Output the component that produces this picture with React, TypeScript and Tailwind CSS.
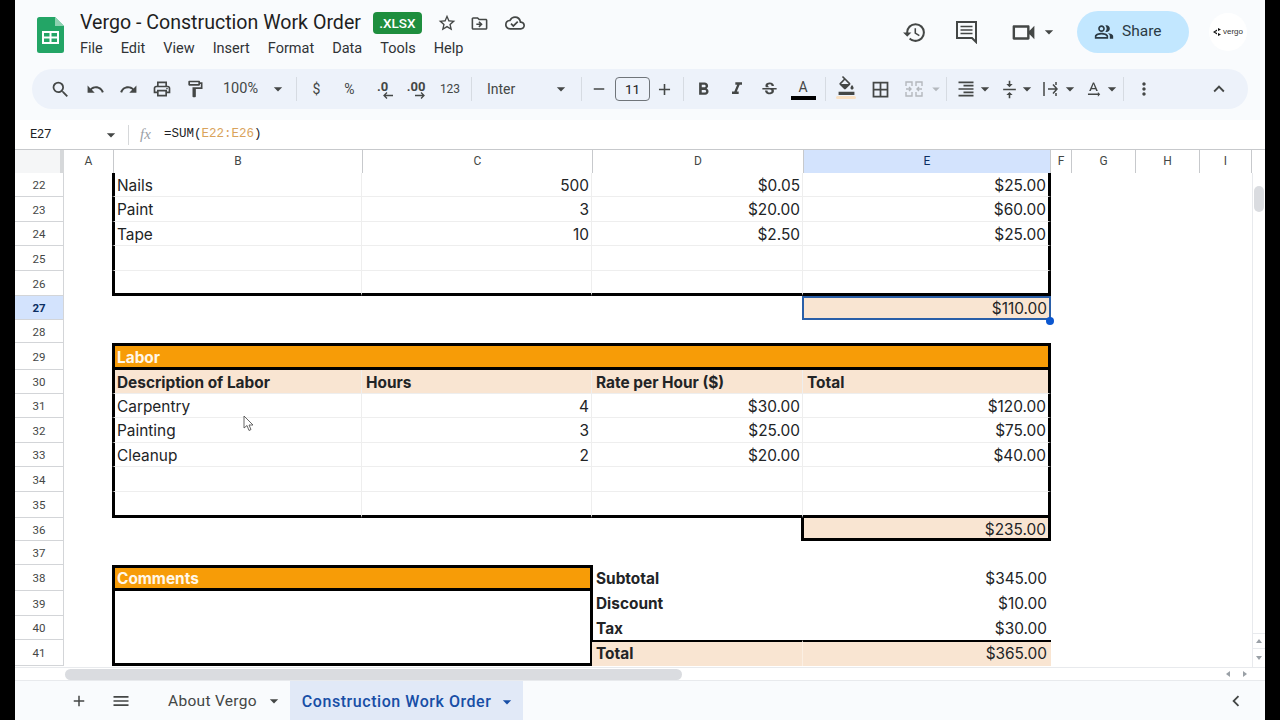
import React from 'react';
import {
  MdSearch, MdUndo, MdRedo, MdOutlinePrint, MdOutlineFormatPaint, MdArrowDropDown, MdRemove, MdAdd,
  MdFormatBold, MdFormatItalic, MdStrikethroughS, MdOutlineFormatColorFill, MdBorderAll,
  MdFormatAlignRight, MdVerticalAlignCenter, MdTextRotationNone, MdMoreVert, MdKeyboardArrowUp,
  MdStarBorder, MdOutlineDriveFileMove, MdOutlineCloudDone, MdHistory, MdOutlineVideocam,
  MdOutlinePeopleAlt, MdMenu, MdChevronLeft,
} from 'react-icons/md';

const Sep = ({ className = '' }: { className?: string }) => <div className={`w-px h-[24px] bg-[#d6dbe2] shrink-0 ${className}`} />;

const Caret = ({ className = 'w-[16px]' }: { className?: string }) => (
  <div className={`flex justify-center shrink-0 ${className}`}>
    <MdArrowDropDown size={20} className="shrink-0" />
  </div>
);

const Tool = ({ children, className = 'w-[33px]' }: { children: React.ReactNode; className?: string }) => (
  <div className={`flex items-center justify-center shrink-0 ${className}`}>{children}</div>
);

const MergeIcon = () => (
  <svg width="18" height="18" viewBox="0 0 18 18" fill="none" stroke="#b4b8bd" strokeWidth="1.4">
    <path d="M1 6V2h6v4M11 6V2h6v4M1 12v4h6v-4M11 12v4h6v-4" />
    <path d="M1 9h5M4 7l2 2-2 2M17 9h-5M14 7l-2 2 2 2" />
  </svg>
);

const WrapIcon = () => (
  <svg width="18" height="18" viewBox="0 0 18 18" fill="none" stroke="#444746" strokeWidth="1.5">
    <path d="M2 2v14M6 9h9M11 4.5 15 9l-4 4.5M14 2v3M14 13v3" />
  </svg>
);

function Toolbar() {
  return (
    <div className="mx-[17px] h-[40px] rounded-full bg-[#edf2fa] flex items-center pl-[12px] text-[#444746] font-['Roboto',sans-serif]">
      <Tool><MdSearch size={21} /></Tool>
      <Tool className="w-[33px] ml-[2px]"><MdUndo size={19} /></Tool>
      <Tool><MdRedo size={19} /></Tool>
      <Tool><MdOutlinePrint size={20} /></Tool>
      <Tool><MdOutlineFormatPaint size={20} /></Tool>
      <Tool className="w-[59px] text-[14.5px]">100%</Tool>
      <Caret />
      <Sep className="ml-[10px]" />
      <Tool className="w-[33px] ml-[3px] text-[14px]">$</Tool>
      <Tool className="w-[33px] text-[14px]">%</Tool>
      <Tool>
        <div className="relative text-[13px] font-bold leading-none -mt-[5px]">
          .0
          <svg className="absolute left-[6px] top-[12px]" width="10" height="7" viewBox="0 0 10 7" fill="none" stroke="#444746" strokeWidth="1.3"><path d="M10 3.5H1M4 .5l-3 3 3 3" /></svg>
        </div>
      </Tool>
      <Tool className="w-[34px]">
        <div className="relative text-[13px] font-bold leading-none -mt-[5px]">
          .00
          <svg className="absolute left-[8px] top-[12px]" width="10" height="7" viewBox="0 0 10 7" fill="none" stroke="#444746" strokeWidth="1.3"><path d="M0 3.5h9M6 .5l3 3-3 3" /></svg>
        </div>
      </Tool>
      <Tool className="w-[34px] text-[12px]">123</Tool>
      <Sep className="ml-[4px]" />
      <div className="ml-[15px] w-[60px] text-[14px] shrink-0">Inter</div>
      <Caret className="w-[16px] ml-[6px]" />
      <Sep className="ml-[12px]" />
      <Tool><MdRemove size={18} /></Tool>
      <div className="w-[35px] h-[24px] border border-[#70757a] rounded-[4px] flex items-center justify-center text-[13.5px] text-[#202124] shrink-0">11</div>
      <Tool className="w-[29px]"><MdAdd size={19} /></Tool>
      <Sep className="ml-[4px]" />
      <Tool className="w-[33px] ml-[3px]"><MdFormatBold size={21} /></Tool>
      <Tool><MdFormatItalic size={20} /></Tool>
      <Tool><MdStrikethroughS size={19} /></Tool>
      <Tool className="w-[34px]">
        <div className="flex flex-col items-center w-[25px]">
          <span className="text-[14px] leading-[15px] mt-[1px]">A</span>
          <div className="w-[25px] h-[4px] bg-black mt-[1px]" />
        </div>
      </Tool>
      <Sep className="ml-[5px]" />
      <Tool className="w-[34px] ml-[3px]">
        <div className="flex flex-col items-center w-[25px]">
          <MdOutlineFormatColorFill size={19} className="-mt-[3px]" />
          <div className="w-[20px] h-[3px] bg-[#f9e0c2] rounded-full mt-[1px]" />
        </div>
      </Tool>
      <Tool className="w-[33px] ml-[1px]"><MdBorderAll size={21} /></Tool>
      <Tool className="w-[32px] ml-[1px]"><MergeIcon /></Tool>
      <div className="flex justify-center w-[12px] shrink-0 text-[#b4b8bd]"><MdArrowDropDown size={18} className="shrink-0" /></div>
      <Sep className="ml-[4px]" />
      <Tool className="w-[32px] ml-[3px]"><MdFormatAlignRight size={20} /></Tool>
      <Caret className="w-[6px]" />
      <Tool className="w-[32px] ml-[5px]"><MdVerticalAlignCenter size={19} /></Tool>
      <Caret className="w-[4px]" />
      <Tool className="w-[32px] ml-[6px]"><WrapIcon /></Tool>
      <Caret className="w-[6px]" />
      <Tool className="w-[32px] ml-[4px]"><MdTextRotationNone size={19} /></Tool>
      <Caret className="w-[6px]" />
      <Sep className="ml-[8px]" />
      <Tool className="w-[33px] ml-[3px]"><MdMoreVert size={20} /></Tool>
      <Tool className="w-[33px] ml-[42px]"><MdKeyboardArrowUp size={22} /></Tool>
    </div>
  );
}

function Header() {
  return (
    <div className="h-[69px] flex items-start font-['Roboto',sans-serif] text-[#1f1f1f]">
      <svg className="ml-[22px] mt-[17px] shrink-0" width="27" height="36" viewBox="0 0 27 36">
        <path d="M2.5 0H18l9 9v24.5a2.5 2.5 0 0 1-2.5 2.5h-22A2.5 2.5 0 0 1 0 33.500v-31A2.500 2.500 0 0 1 2.500 0z" fill="#23a566" />
        <path d="M18 0l9 9h-9z" fill="#8ed1b1" />
        <path d="M6 15h15v11H6z" fill="none" stroke="#fff" strokeWidth="2" />
        <path d="M6 20.500h15M13.500 15v11" stroke="#fff" strokeWidth="2" />
      </svg>
      <div className="ml-[16px] shrink-0 w-[470px]">
        <div className="flex items-center h-[24px] mt-[11px]">
          <span className="text-[19.6px] whitespace-nowrap">Vergo - Construction Work Order</span>
          <span className="ml-[12px] w-[49px] h-[22px] bg-[#1e8e3e] rounded-[4px] text-white text-[13.5px] font-medium flex items-center justify-center">.XLSX</span>
          <MdStarBorder size={20} className="ml-[15px] text-[#444746] shrink-0" />
          <MdOutlineDriveFileMove size={19} className="ml-[13px] text-[#444746] shrink-0" />
          <MdOutlineCloudDone size={20} className="ml-[16px] text-[#444746] shrink-0" />
        </div>
        <div className="flex gap-[18px] mt-[3px] text-[14.5px] text-[#303336]">
          <span>File</span><span>Edit</span><span>View</span><span>Insert</span><span>Format</span><span>Data</span><span>Tools</span><span>Help</span>
        </div>
      </div>
      <div className="ml-auto flex items-center h-[42px] mt-[11px] text-[#444746]">
        <MdHistory size={25} className="shrink-0" />
        <svg className="ml-[28px] shrink-0" width="23" height="24" viewBox="0 0 23 24" fill="none" stroke="#444746" strokeWidth="2">
          <path d="M2 2h19v20l-4-4H2z" />
          <path d="M5.500 6.500h12M5.500 10h12M5.500 13.500h12" strokeWidth="1.600" />
        </svg>
        <MdOutlineVideocam size={29} className="ml-[31px] shrink-0" />
        <Caret className="w-[14px] ml-[4px]" />
        <div className="ml-[21px] w-[112px] h-[42px] rounded-full bg-[#c2e7ff] flex items-center pl-[17px] gap-[8px] text-[15.5px] text-[#2b3a44]">
          <MdOutlinePeopleAlt size={20} />
          <span>Share</span>
        </div>
        <div className="ml-[20px] mr-[18px] w-[38px] h-[38px] rounded-full bg-white flex items-center justify-center gap-[1px] text-[8px] text-[#333] font-['Liberation_Sans',sans-serif]">
          <svg width="9" height="8" viewBox="0 0 9 8" fill="#111"><path d="M0 4l4-2.500V3L2 4l2 1v1.500zM5 0l3 1.500L5 3zM5 5l3 1.500L5 8z" /></svg>
          <span>vergo</span>
        </div>
      </div>
    </div>
  );
}

function FormulaBar() {
  return (
    <div className="mt-[11px] h-[29px] bg-white flex items-center text-[#444746]">
      <span className="ml-[15px] w-[73px] text-[12.500px] text-[#202124] font-['Roboto',sans-serif]">E27</span>
      <Caret className="w-[16px]" />
      <div className="ml-[9px] w-px h-[20px] bg-[#d6d8da]" />
      <span className="ml-[11px] w-[24px] text-[15px] italic text-[#9aa0a6] font-['Liberation_Serif',serif]">fx</span>
      <span className="text-[12.500px] font-['Liberation_Mono',monospace] text-[#202124]">
        =SUM(<span className="text-[#d9a35b]">E22:E26</span>)
      </span>
    </div>
  );
}

const ColHead = ({ label, className, active }: { label: string; className: string; active?: boolean }) => (
  <div className={`h-full flex items-center justify-center pb-px border-r border-[#c7c9cc] text-[12px] shrink-0 ${active ? 'bg-[#d3e3fd] text-[#0b2e63]' : 'text-[#444746]'} ${className}`}>{label}</div>
);

function ColumnHeaders() {
  return (
    <div className="h-[25px] flex bg-white border-y border-[#c7c9cc] font-['Roboto',sans-serif]">
      <div className="w-[49px] h-full bg-[#f5f6f7] border-r-[4px] border-[#d6d8da] shrink-0" />
      <ColHead label="A" className="w-[50px]" />
      <ColHead label="B" className="w-[249px]" />
      <ColHead label="C" className="w-[230px]" />
      <ColHead label="D" className="w-[211px]" />
      <ColHead label="E" className="w-[247px]" active />
      <ColHead label="F" className="w-[21px]" />
      <ColHead label="G" className="w-[64px]" />
      <ColHead label="H" className="w-[64px]" />
      <ColHead label="I" className="w-[52px]" />
    </div>
  );
}

const Num = ({ n, active }: { n: number; active?: boolean }) => (
  <div className={`flex items-center justify-center pt-[3px] border-b border-r border-[#d3d5d8] text-[11.500px] font-['Roboto',sans-serif] ${active ? 'bg-[#d3e3fd] font-bold text-[#0b2e63]' : 'bg-white text-[#444746]'}`}>{n}</div>
);

const left = 'justify-start pl-[2px]';
const right = 'justify-end pr-[2px]';
const rightWide = 'justify-end pr-[4px]';
const line = 'border-r border-b border-[#eeeeee]';

const Cell = ({ children, className = '' }: { children?: React.ReactNode; className?: string }) => (
  <div className={`flex items-center overflow-hidden whitespace-nowrap min-w-0 pt-[2px] ${className}`}>{children}</div>
);

// one data line of a boxed table, B to E; last closes the box
function ItemRow({ n, label, qty, rate, total, last }: { n: number; label?: string; qty?: number; rate?: string; total?: string; last?: boolean }) {
  const closing = last ? 'border-b-[3px] border-b-black' : '';
  return (
    <>
      <Num n={n} />
      <Cell />
      <Cell className={`${line} ${left} border-l-[3px] border-l-black ${closing}`}>{label}</Cell>
      <Cell className={`${line} ${right} ${closing}`}>{qty}</Cell>
      <Cell className={`${line} ${right} ${closing}`}>{rate}</Cell>
      <Cell className={`${right} border-b border-[#eeeeee] border-r-[3px] border-r-black ${closing}`}>{total}</Cell>
      <Cell />
    </>
  );
}

const Blank = ({ n }: { n: number }) => (
  <>
    <Num n={n} />
    <Cell className="col-span-6" />
  </>
);

function Sheet() {
  return (
    <div className="relative h-[494px] overflow-hidden bg-white grid grid-cols-[49px_48px_250px_230px_211px_248px_1fr] grid-rows-[24px_25px_24px_25px_25px_24px_23px_27px_24px_24px_25px_24px_25px_26px_23px_24px_26px_25px_24px_26px_1px] text-[15.4px] text-[#222426] font-['Inter',sans-serif]">
      <ItemRow n={22} label="Nails" qty={500} rate="$0.05" total="$25.00" />
      <ItemRow n={23} label="Paint" qty={3} rate="$20.00" total="$60.00" />
      <ItemRow n={24} label="Tape" qty={10} rate="$2.50" total="$25.00" />
      <ItemRow n={25} />
      <ItemRow n={26} last />

      <Num n={27} active />
      <Cell className="col-span-4" />
      <Cell className={`${right} bg-[#f9e5d2] border-2 border-[#2a5fa8] -ml-px relative`}>$110.00</Cell>
      <Cell />

      <Blank n={28} />

      <Num n={29} />
      <Cell />
      <Cell className="col-span-4 bg-[#f79c07] border-[3px] border-black pl-[2px] font-bold text-[#fff7e8]">Labor</Cell>
      <Cell />

      <Num n={30} />
      <Cell />
      <Cell className={`${line} ${left} bg-[#f9e5d2] font-bold border-l-[3px] border-l-black`}>Description of Labor</Cell>
      <Cell className={`${line} pl-[4px] bg-[#f9e5d2] font-bold`}>Hours</Cell>
      <Cell className={`${line} pl-[4px] bg-[#f9e5d2] font-bold`}>Rate per Hour ($)</Cell>
      <Cell className="border-b border-[#eeeeee] border-r-[3px] border-r-black pl-[4px] bg-[#f9e5d2] font-bold">Total</Cell>
      <Cell />

      <ItemRow n={31} label="Carpentry" qty={4} rate="$30.00" total="$120.00" />
      <ItemRow n={32} label="Painting" qty={3} rate="$25.00" total="$75.00" />
      <ItemRow n={33} label="Cleanup" qty={2} rate="$20.00" total="$40.00" />
      <ItemRow n={34} />
      <ItemRow n={35} last />

      <Num n={36} />
      <Cell className="col-span-4" />
      <Cell className={`${right} bg-[#f9e5d2] border-[3px] border-t-0 border-black -ml-[2px]`}>
        <span className="mt-[2px]">$235.00</span>
      </Cell>
      <Cell />

      <Blank n={37} />

      <Num n={38} />
      <Cell />
      <Cell className="col-span-2 bg-[#f79c07] border-[3px] border-black pl-[2px] -mr-px font-bold text-[#fff7e8]">Comments</Cell>
      <Cell className="pl-[4px] font-bold">Subtotal</Cell>
      <Cell className={rightWide}>$345.00</Cell>
      <Cell />

      <Num n={39} />
      <Cell />
      <Cell className="col-span-2 row-span-3 border-[3px] border-t-0 border-black -mr-px" />
      <Cell className="pl-[4px] pb-[2px] font-bold">Discount</Cell>
      <Cell className={`${rightWide} pb-[2px]`}>$10.00</Cell>
      <Cell />

      <Num n={40} />
      <Cell />
      <Cell className="pl-[4px] font-bold">Tax</Cell>
      <Cell className={rightWide}>$30.00</Cell>
      <Cell />

      <Num n={41} />
      <Cell />
      <Cell className="pl-[4px] pb-[3px] font-bold bg-[#f9e5d2] border-t-2 border-t-black border-r border-r-[#fbefe3]">Total</Cell>
      <Cell className={`${rightWide} pb-[3px] bg-[#f9e5d2] border-t-2 border-t-black`}>$365.00</Cell>
      <Cell />

      {/* fill handle */}
      <div className="absolute left-[1031px] top-[144px] w-[8px] h-[8px] rounded-full bg-[#0b57d0]" />
      {/* mouse pointer */}
      <svg className="absolute left-[228px] top-[242px]" width="11" height="17" viewBox="0 0 11 17" fill="#fff" stroke="#555" strokeWidth="0.900">
        <path d="M1 1v12l3-2.500 2 5 2-1-2-4.500h4z" />
      </svg>
    </div>
  );
}

const Tri = ({ d }: { d: string }) => (
  <svg width="6" height="6" viewBox="0 0 6 6" fill="#9aa0a6"><path d={d} /></svg>
);

function VerticalScroll() {
  return (
    <div className="w-[13px] h-[494px] bg-white border-l border-[#e8eaed] flex flex-col items-center shrink-0">
      <div className="w-[10px] h-[26px] mt-[13px] rounded-full bg-[#dadce0] shrink-0" />
      <div className="mt-auto h-[16px] w-full border-y border-[#e8eaed] flex items-center justify-center"><Tri d="M3 1l3 4H0z" /></div>
      <div className="h-[17px] w-full flex items-center justify-center mb-[1px]"><Tri d="M3 5 0 1h6z" /></div>
    </div>
  );
}

function HorizontalScroll() {
  return (
    <div className="h-[14px] bg-white border-y border-[#e8eaed] flex items-center">
      <div className="ml-[50px] w-[617px] h-[11px] rounded-full bg-[#dadce0]" />
      <div className="ml-auto flex items-center mr-[17px] gap-[11px]">
        <Tri d="M1 3l4-3v6z" />
        <Tri d="M5 3 1 0v6z" />
      </div>
    </div>
  );
}

function Tabs() {
  return (
    <div className="h-[39px] flex items-center font-['Roboto',sans-serif] text-[15.5px] text-[#444746]">
      <MdAdd size={18} className="ml-[55px] shrink-0" />
      <MdMenu size={20} className="ml-[23px] shrink-0" />
      <span className="ml-[37px] pt-[2px] tracking-[0.3px]">About Vergo</span>
      <Caret className="w-[16px] ml-[9px]" />
      <div className="ml-[8px] w-[233px] h-full bg-[#e1e9f7] flex items-center pl-[12px] pt-[2px] font-medium text-[16px] text-[#174ea6] tracking-[0.55px]">
        <span>Construction Work Order</span>
        <Caret className="w-[16px] ml-[8px]" />
      </div>
      <MdChevronLeft size={22} className="ml-auto mr-[18px] text-[#444746] shrink-0" />
    </div>
  );
}

export default function App() {
  return (
    <div className="w-[1280px] h-[720px] overflow-hidden flex bg-black">
      <div className="w-[15px] shrink-0" />
      <div className="w-[1250px] shrink-0 bg-[#f9fbfd]">
        <Header />
        <Toolbar />
        <FormulaBar />
        <ColumnHeaders />
        <div className="flex -mt-px">
          <div className="w-[1237px] shrink-0"><Sheet /></div>
          <VerticalScroll />
        </div>
        <HorizontalScroll />
        <Tabs />
      </div>
      <div className="w-[15px] shrink-0" />
    </div>
  );
}
